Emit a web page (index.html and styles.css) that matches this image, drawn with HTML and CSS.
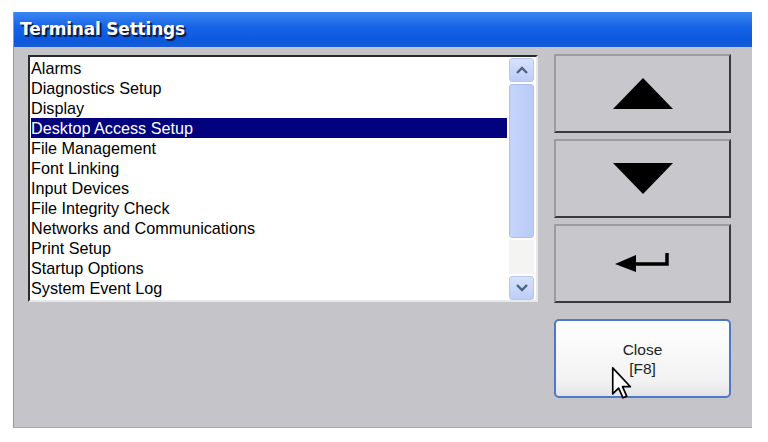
FILE: index.html
```html
<html>
<head>
	<meta charset="utf-8">
	<title>Terminal Settings</title>
	<link rel="stylesheet" href="styles.css">
</head>
<body>
	<div id="window">
		<div id="title-bar">Terminal Settings</div>
		<div id="win-body">
			<div id="list-box">
				<ul id="items">
					<li>Alarms</li>
					<li>Diagnostics Setup</li>
					<li>Display</li>
					<li class="selected">Desktop Access Setup</li>
					<li>File Management</li>
					<li>Font Linking</li>
					<li>Input Devices</li>
					<li>File Integrity Check</li>
					<li>Networks and Communications</li>
					<li>Print Setup</li>
					<li>Startup Options</li>
					<li>System Event Log</li>
				</ul>
				<div id="scroll-bar">
					<div class="sb-btn">
						<svg width="12" height="8" viewBox="0 0 12 8"><path d="M1 7 L6 2 L11 7" fill="none" stroke="#4d6185" stroke-width="2.4"/></svg>
					</div>
					<div id="sb-thumb"></div>
					<div id="sb-track"></div>
					<div class="sb-btn">
						<svg width="12" height="8" viewBox="0 0 12 8"><path d="M1 1 L6 6 L11 1" fill="none" stroke="#4d6185" stroke-width="2.4"/></svg>
					</div>
				</div>
			</div>
			<div id="side-btns">
				<div class="key-btn">
					<svg width="60" height="32" viewBox="0 0 60 32"><polygon points="30,0 60,31 0,31" fill="#000"/></svg>
				</div>
				<div class="key-btn">
					<svg width="60" height="32" viewBox="0 0 60 32"><polygon points="0,0 60,0 30,31" fill="#000"/></svg>
				</div>
				<div class="key-btn">
					<svg width="56" height="24" viewBox="0 0 56 24"><polygon points="0,12 21,3 21,20" fill="#000"/><path d="M18 12 H52 V1" fill="none" stroke="#000" stroke-width="3.5"/></svg>
				</div>
				<div id="close-btn">Close<br>[F8]
					<svg id="cursor" width="22" height="32" viewBox="0 0 12 19"><path d="M0.5 0.5 V16 L4 12.5 L6.6 18.3 L8.8 17.3 L6.3 11.7 H11 Z" fill="#fff" stroke="#000" stroke-width="1" stroke-linejoin="round"/></svg>
				</div>
			</div>
		</div>
	</div>
</body>
</html>
```

FILE: styles.css
```css
html,body{
	margin: 0px;
	padding: 0px;
	height: 100%;
	width: 100%;
}

body{
	background-color: #FFF;
	font-family: "DejaVu Sans", sans-serif;
}

#window{
	position: relative;
	left: 13px;
	top: 12px;
	width: 739px;
	height: 416px;
	box-sizing: border-box;
	display: flex;
	flex-direction: column;
	background-color: #C5C4C8;
	border-left: 1px solid #9A9A9E;
	border-bottom: 1px solid #A8A8AC;
}

#title-bar{
	height: 35px;
	box-sizing: border-box;
	padding-left: 6px;
	line-height: 35px;
	color: #FFF;
	font-family: "DejaVu Sans", sans-serif;
	font-weight: bold;
	font-size: 17px;
	letter-spacing: -0.2px;
	text-shadow: 1px 1px 0px #0A1850, 2px 2px 1px #0A1850;
	background: linear-gradient(#3C86F2, #1462E6 45%, #0C58DC 85%, #1A5CD0);
}

#win-body{
	display: flex;
	padding: 8px 21px 0px 14px;
	gap: 16px;
}

#list-box{
	width: 510px;
	height: 247px;
	box-sizing: border-box;
	display: flex;
	background-color: #FFF;
	border-top: 2px solid #2A2A2A;
	border-left: 2px solid #2A2A2A;
	border-right: 2px solid #E8E8EA;
	border-bottom: 2px solid #E8E8EA;
	padding: 1px 2px 0px 1px;
}

#items{
	flex: 1;
	list-style: none;
	margin: 0px;
	padding: 0px;
}

#items li{
	height: 20px;
	line-height: 21px;
	padding-left: 0px;
	font-family: "Liberation Sans", sans-serif;
	font-size: 16.2px;
	color: #000;
	white-space: nowrap;
}

#items li.selected{
	background-color: #02027E;
	color: #FFF;
}

#scroll-bar{
	width: 25px;
	display: flex;
	flex-direction: column;
	gap: 2px;
	margin-left: 2px;
}

.sb-btn{
	height: 24px;
	box-sizing: border-box;
	display: flex;
	align-items: center;
	justify-content: center;
	background: linear-gradient(#D6E2FC, #BCCDF6);
	border: 1px solid #B6C6EE;
	border-radius: 3px;
}

#sb-thumb{
	height: 154px;
	box-sizing: border-box;
	background: linear-gradient(90deg, #C6D4FA, #BACBF8);
	border: 1px solid #AFC0EC;
	border-radius: 3px;
}

#sb-track{
	flex: 1;
	background-color: #F4F4F2;
}

#side-btns{
	width: 177px;
	margin-top: -1px;
	display: flex;
	flex-direction: column;
	gap: 6px;
}

.key-btn{
	height: 79px;
	box-sizing: border-box;
	display: flex;
	align-items: center;
	justify-content: center;
	background-color: #C8C7CB;
	border-top: 2px solid #9C9CA0;
	border-left: 2px solid #9C9CA0;
	border-right: 2px solid #3A3A3A;
	border-bottom: 2px solid #3A3A3A;
}

#close-btn{
	position: relative;
	margin-top: 10px;
	height: 79px;
	box-sizing: border-box;
	border: 2px solid #4E78C8;
	border-radius: 5px;
	background: linear-gradient(#FFFFFF, #F2F2F2 80%, #E4E4E8);
	display: flex;
	flex-direction: column;
	align-items: center;
	justify-content: center;
	text-align: center;
	font-family: "Liberation Sans", sans-serif;
	font-size: 15.5px;
	line-height: 19px;
	color: #222;
}

#cursor{
	position: absolute;
	left: 55px;
	top: 46px;
}
```
